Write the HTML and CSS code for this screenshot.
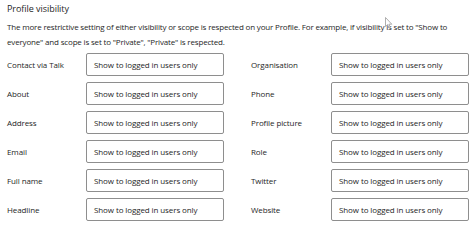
FILE: index.html
```html
<!DOCTYPE html>
<html>
<head>
<meta charset="utf-8">
<link rel="stylesheet" href="styles.css">
</head>
<body>
<div class="page">
  <h1 class="title">Profile visibility</h1>
  <p class="intro">The more restrictive setting of either visibility or scope is respected on your Profile. For example, if visibility is set to "Show to everyone" and scope is set to "Private", "Private" is respected.</p>
  <div class="cols">
    <div class="col">
      <div class="row"><span class="label">Contact via Talk</span><div class="select">Show to logged in users only</div></div>
      <div class="row"><span class="label">About</span><div class="select">Show to logged in users only</div></div>
      <div class="row"><span class="label">Address</span><div class="select">Show to logged in users only</div></div>
      <div class="row"><span class="label">Email</span><div class="select">Show to logged in users only</div></div>
      <div class="row"><span class="label">Full name</span><div class="select">Show to logged in users only</div></div>
      <div class="row"><span class="label">Headline</span><div class="select">Show to logged in users only</div></div>
    </div>
    <div class="col">
      <div class="row"><span class="label">Organisation</span><div class="select">Show to logged in users only</div></div>
      <div class="row"><span class="label">Phone</span><div class="select">Show to logged in users only</div></div>
      <div class="row"><span class="label">Profile picture</span><div class="select">Show to logged in users only</div></div>
      <div class="row"><span class="label">Role</span><div class="select">Show to logged in users only</div></div>
      <div class="row"><span class="label">Twitter</span><div class="select">Show to logged in users only</div></div>
      <div class="row"><span class="label">Website</span><div class="select">Show to logged in users only</div></div>
    </div>
  </div>
  <svg class="cursor" width="8" height="12" viewBox="0 0 8 12"><path d="M0.5 0.5 L0.5 9.5 L2.6 7.6 L4 11 L5.3 10.4 L3.9 7.2 L6.8 7.2 Z" fill="#fff" stroke="#9a9a9a" stroke-width="0.8"/></svg>
</div>
</body>
</html>
```
FILE: styles.css
```css
html, body {
  margin: 0;
  padding: 0;
  background: #fff;
}
body {
  font-family: "Open Sans", "Noto Sans", sans-serif;
  color: #262626;
  font-size: 8px;
  letter-spacing: -0.1px;
}
.page {
  position: relative;
  padding: 3px 7px 0 7px;
}
.title {
  font-size: 9px;
  font-weight: 400;
  margin: 0;
  line-height: 12px;
  letter-spacing: -0.05px;
}
.intro {
  margin: 4px 0 0 0;
  line-height: 15px;
  letter-spacing: -0.17px;
}
.cols {
  display: flex;
  gap: 27px;
  margin-top: 4px;
}
.col {
  display: flex;
  flex-direction: column;
  gap: 6px;
}
.row {
  display: flex;
  align-items: center;
  height: 23px;
}
.label {
  width: 79px;
  flex: none;
}
.col + .col .label {
  width: 80px;
}
.select {
  box-sizing: border-box;
  width: 138px;
  height: 23px;
  border: 1px solid #8e8e8e;
  border-radius: 2px;
  padding-left: 7px;
  display: flex;
  align-items: center;
}
.cursor {
  position: absolute;
  left: 385px;
  top: 17px;
}
```
